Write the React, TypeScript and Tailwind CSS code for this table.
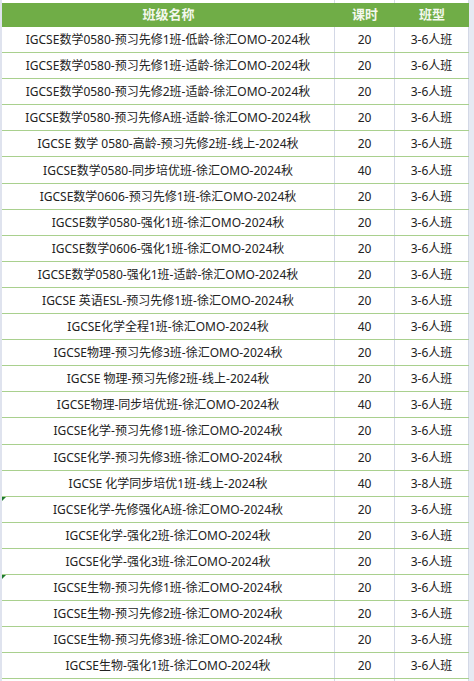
const rows: [string, string, string, boolean?][] = [
  ['IGCSE数学0580-预习先修1班-低龄-徐汇OMO-2024秋', '20', '3-6人班'],
  ['IGCSE数学0580-预习先修1班-适龄-徐汇OMO-2024秋', '20', '3-6人班'],
  ['IGCSE数学0580-预习先修2班-适龄-徐汇OMO-2024秋', '20', '3-6人班'],
  ['IGCSE数学0580-预习先修A班-适龄-徐汇OMO-2024秋', '20', '3-6人班'],
  ['IGCSE 数学 0580-高龄-预习先修2班-线上-2024秋', '20', '3-6人班'],
  ['IGCSE数学0580-同步培优班-徐汇OMO-2024秋', '40', '3-6人班'],
  ['IGCSE数学0606-预习先修1班-徐汇OMO-2024秋', '20', '3-6人班'],
  ['IGCSE数学0580-强化1班-徐汇OMO-2024秋', '20', '3-6人班'],
  ['IGCSE数学0606-强化1班-徐汇OMO-2024秋', '20', '3-6人班'],
  ['IGCSE数学0580-强化1班-适龄-徐汇OMO-2024秋', '20', '3-6人班'],
  ['IGCSE 英语ESL-预习先修1班-徐汇OMO-2024秋', '20', '3-6人班'],
  ['IGCSE化学全程1班-徐汇OMO-2024秋', '40', '3-6人班'],
  ['IGCSE物理-预习先修3班-徐汇OMO-2024秋', '20', '3-6人班'],
  ['IGCSE 物理-预习先修2班-线上-2024秋', '20', '3-6人班'],
  ['IGCSE物理-同步培优班-徐汇OMO-2024秋', '40', '3-6人班'],
  ['IGCSE化学-预习先修1班-徐汇OMO-2024秋', '20', '3-6人班'],
  ['IGCSE化学-预习先修3班-徐汇OMO-2024秋', '20', '3-6人班'],
  ['IGCSE 化学同步培优1班-线上-2024秋', '40', '3-8人班'],
  ['IGCSE化学-先修强化A班-徐汇OMO-2024秋', '20', '3-6人班', true],
  ['IGCSE化学-强化2班-徐汇OMO-2024秋', '20', '3-6人班'],
  ['IGCSE化学-强化3班-徐汇OMO-2024秋', '20', '3-6人班'],
  ['IGCSE生物-预习先修1班-徐汇OMO-2024秋', '20', '3-6人班', true],
  ['IGCSE生物-预习先修2班-徐汇OMO-2024秋', '20', '3-6人班'],
  ['IGCSE生物-预习先修3班-徐汇OMO-2024秋', '20', '3-6人班'],
  ['IGCSE生物-强化1班-徐汇OMO-2024秋', '20', '3-6人班'],
];

const font = { fontFamily: '"Noto Sans", "Noto Sans CJK SC", sans-serif' };

export default function App() {
  return (
    <div
      className="flex h-[681px] w-[474px] overflow-hidden bg-white text-[12px] text-[#222]"
      style={font}
    >
      <div className="w-[2px] shrink-0 bg-[#dfe3ee]" />
      <div className="flex w-[467px] shrink-0 flex-col">
        {/* top gridline strip */}
        <div className="grid h-[3px] grid-cols-[333px_60px_74px]">
          <div className="border-r border-[#d6dae6]" />
          <div className="border-r border-[#d6dae6]" />
          <div className="border-r border-[#d6dae6]" />
        </div>
        {/* header */}
        <div className="grid h-[24px] grid-cols-[333px_60px_74px] bg-[#70ad47] text-[13px] font-bold text-[#f4f8ee]">
          <div className="flex items-center justify-center">班级名称</div>
          <div className="flex items-center justify-center">课时</div>
          <div className="flex items-center justify-center">班型</div>
        </div>
        {rows.map(([name, hours, size, mark], i) => (
          <div
            key={i}
            className="relative grid h-[26.1px] shrink-0 grid-cols-[333px_60px_74px] border-b border-[#a9d08e]"
          >
            {mark && (
              <span className="absolute left-0 top-0 h-0 w-0 border-l-[4px] border-t-[4px] border-l-transparent border-t-[#1e7a2e] [transform:scaleX(-1)]" />
            )}
            <div className="flex items-center justify-center border-r border-[#d3d8e6] pt-[1px]">{name}</div>
            <div className="flex items-center justify-center border-r border-[#d3d8e6] pt-[1px]">{hours}</div>
            <div className="flex items-center justify-center border-r border-[#d3d8e6] pt-[1px]">{size}</div>
          </div>
        ))}
        <div className="grid flex-1 grid-cols-[333px_60px_74px]">
          <div className="border-r border-[#d3d8e6]" />
          <div className="border-r border-[#d3d8e6]" />
          <div className="border-r border-[#d3d8e6]" />
        </div>
      </div>
      <div className="flex-1 bg-[#e6eaf3]" />
    </div>
  );
}
